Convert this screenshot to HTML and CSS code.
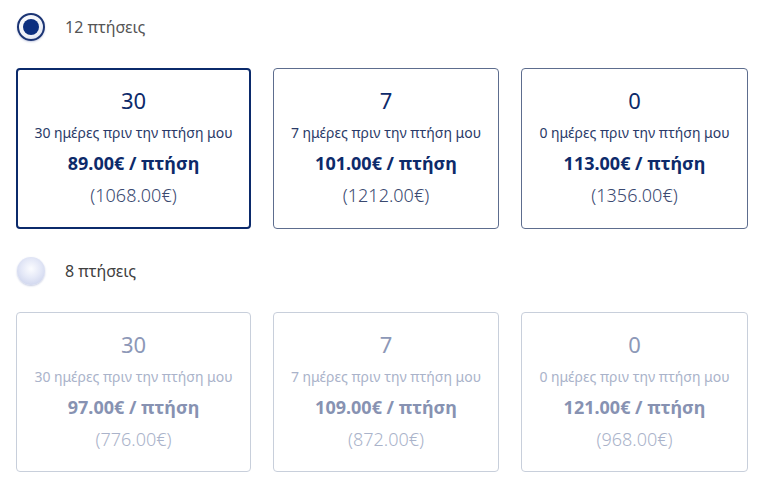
FILE: index.html
```html
<!DOCTYPE html>
<html>
    <head>
        <title>Πακέτα πτήσεων</title>
        <meta name="viewport" content="width=device-width, initial-scale=1">
        <link rel="stylesheet" href="styles.css">
    </head>
    <body>
        <div class="group">
            <label class="option">
                <span class="radio checked"></span>
                <span class="option-label">12 πτήσεις</span>
            </label>
            <div class="cards">
                <div class="card selected">
                    <div class="days">30</div>
                    <div class="desc">30 ημέρες πριν την πτήση μου</div>
                    <div class="price">89.00€ / πτήση</div>
                    <div class="total">(1068.00€)</div>
                </div>
                <div class="card">
                    <div class="days">7</div>
                    <div class="desc">7 ημέρες πριν την πτήση μου</div>
                    <div class="price">101.00€ / πτήση</div>
                    <div class="total">(1212.00€)</div>
                </div>
                <div class="card">
                    <div class="days">0</div>
                    <div class="desc">0 ημέρες πριν την πτήση μου</div>
                    <div class="price">113.00€ / πτήση</div>
                    <div class="total">(1356.00€)</div>
                </div>
            </div>
        </div>

        <div class="group disabled">
            <label class="option">
                <span class="radio"></span>
                <span class="option-label">8 πτήσεις</span>
            </label>
            <div class="cards">
                <div class="card">
                    <div class="days">30</div>
                    <div class="desc">30 ημέρες πριν την πτήση μου</div>
                    <div class="price">97.00€ / πτήση</div>
                    <div class="total">(776.00€)</div>
                </div>
                <div class="card">
                    <div class="days">7</div>
                    <div class="desc">7 ημέρες πριν την πτήση μου</div>
                    <div class="price">109.00€ / πτήση</div>
                    <div class="total">(872.00€)</div>
                </div>
                <div class="card">
                    <div class="days">0</div>
                    <div class="desc">0 ημέρες πριν την πτήση μου</div>
                    <div class="price">121.00€ / πτήση</div>
                    <div class="total">(968.00€)</div>
                </div>
            </div>
        </div>
    </body>
</html>
```

FILE: styles.css
```css
html {
    background: #fff;
}

body {
    margin: 0;
    padding: 13px 0 0 16px;
    font-family: "Noto Sans", "Open Sans", sans-serif;
    color: #0d2a6a;
    display: flex;
    flex-direction: column;
    gap: 28px;
}

.group {
    display: flex;
    flex-direction: column;
    gap: 27px;
}

.option {
    display: flex;
    align-items: center;
    height: 28px;
    padding-left: 1px;
    cursor: pointer;
}

.radio {
    width: 28px;
    height: 28px;
    border-radius: 50%;
    box-sizing: border-box;
    display: flex;
    align-items: center;
    justify-content: center;
    background: radial-gradient(circle at 50% 42%, #fbfcff 0%, #e4e8f7 45%, #c3cbe8 100%);
    box-shadow: 0 1px 2px rgba(70, 90, 160, 0.3);
}

.radio.checked {
    border: 2px solid #1b3474;
    background: radial-gradient(circle at 40% 35%, #ffffff 0%, #eef1f8 60%, #cdd4e6 100%);
}

/* inner dot of the selected option */
.radio.checked::after {
    content: "";
    width: 16px;
    height: 16px;
    border-radius: 50%;
    background: #0c2f7f;
}

.option-label {
    margin-left: 20px;
    font-size: 16px;
    color: #555;
}

.disabled .option-label {
    color: #404040;
}

.cards {
    display: grid;
    grid-template-columns: 235px 226px 227px;
    column-gap: 22px;
}

.card {
    height: 161px;
    box-sizing: border-box;
    border: 1px solid #5d6d8e;
    border-radius: 4px;
    padding-top: 17px;
    display: flex;
    flex-direction: column;
    align-items: center;
    gap: 8px;
    text-align: center;
}

.card.selected {
    border: 2px solid #0b2a6b;
    padding-top: 16px;
}

.days {
    font-size: 22px;
    line-height: 28px;
    margin-bottom: 1px;
    color: #0d2a6a;
}

.desc {
    font-size: 14px;
    line-height: 20px;
    color: #2a3a68;
}

.price {
    font-size: 18px;
    font-weight: bold;
    line-height: 24px;
    color: #0d2a6a;
}

.total {
    font-size: 18px;
    font-weight: 300;
    line-height: 24px;
    color: #3a4970;
}

.disabled .card {
    border-color: #c8cfdb;
    height: 160px;
}

.disabled .days {
    color: #8d98b7;
}

.disabled .desc,
.disabled .total {
    color: #aab3ca;
}

.disabled .price {
    color: #8792b2;
}
```
